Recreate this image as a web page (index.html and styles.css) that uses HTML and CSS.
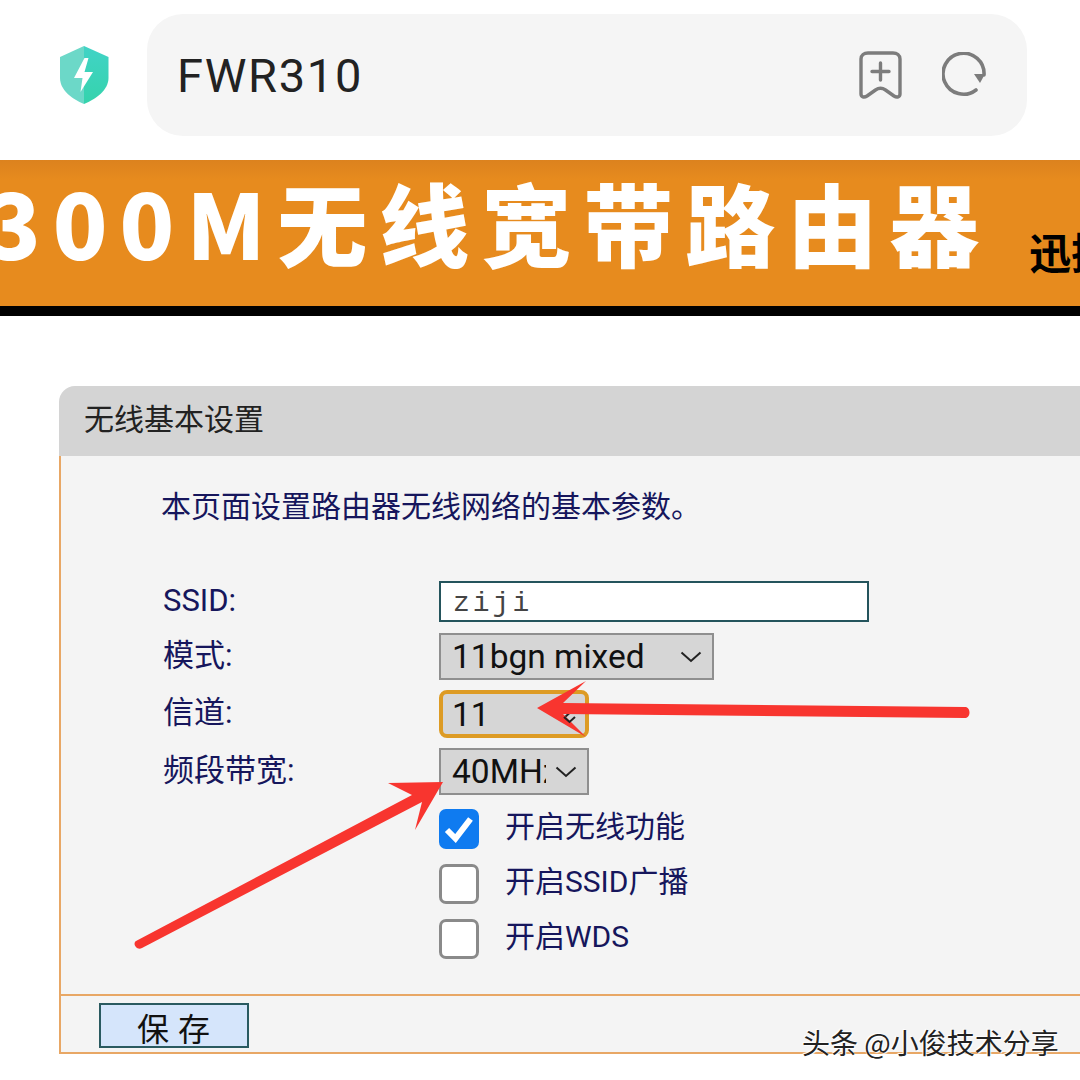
FILE: index.html
```html
<!DOCTYPE html>
<html lang="zh-CN">

<head>
    <meta charset="UTF-8" />
    <title>FWR310</title>
    <link rel="stylesheet" href="styles.css">
</head>

<body>
    <div class="topbar">
        <svg class="shield" width="52" height="60" viewBox="0 0 52 60">
            <defs>
                <linearGradient id="shieldRight" x1="0" y1="0" x2="0" y2="1">
                    <stop offset="0" stop-color="#41d3c6" />
                    <stop offset="1" stop-color="#35d3ac" />
                </linearGradient>
            </defs>
            <path d="M26 1L2 12V33C2 45 14 54 26 59V1Z" fill="#6cd8c8" />
            <path d="M26 1L50.500 12V33C50.500 45 38 54 26 59V1Z" fill="url(#shieldRight)" />
            <path d="M26.500 13L16 33H24.500L22.500 47L35 27H26.500L30.500 13Z" fill="#fff" />
        </svg>
        <div class="address">
            <span class="address-text">FWR310</span>
            <svg class="bookmark" width="44" height="50" viewBox="0 0 44 50" fill="none" stroke="#7c7c7c"
                stroke-width="3.400" stroke-linecap="round" stroke-linejoin="round">
                <path d="M9 3H34C38 3 41 5 41 9V44C41 47 38 48 35 46L26.500 40C23.500 38 19.500 38 16.500 40L8 46C5 48 2 47 2 44V9C2 5 5 3 9 3Z" />
                <path d="M21.500 13V30M13 21.500H30" />
            </svg>
            <svg class="refresh" width="46" height="46" viewBox="0 0 46 46" fill="none">
                <path d="M34 38A20.500 20.500 0 1 1 42 23" stroke="#7c7c7c" stroke-width="3.600" stroke-linecap="round" />
                <path d="M32 22H43L38 31Z" fill="#7c7c7c" />
            </svg>
        </div>
    </div>

    <div class="banner">
        <span class="banner-title">300M无线宽带路由器</span>
        <span class="banner-sub">迅捷</span>
    </div>

    <div class="panel">
        <div class="panel-head">无线基本设置</div>
        <div class="panel-body">
            <p class="intro">本页面设置路由器无线网络的基本参数。</p>
            <div class="form">
                <label class="row-label">SSID:</label>
                <div class="text-input">ziji</div>

                <label class="row-label">模式:</label>
                <div class="select select-mode">
                    <span class="select-value">11bgn mixed</span>
                    <svg class="chevron" width="22" height="12" viewBox="0 0 22 12">
                        <path d="M1.500 1.500L11 10L20.500 1.500" />
                    </svg>
                </div>

                <label class="row-label">信道:</label>
                <div class="select select-short select-focus">
                    <span class="select-value">11</span>
                    <svg class="chevron" width="22" height="12" viewBox="0 0 22 12">
                        <path d="M1.500 1.500L11 10L20.500 1.500" />
                    </svg>
                </div>

                <label class="row-label">频段带宽:</label>
                <div class="select select-short">
                    <span class="select-value">40MHz</span>
                    <svg class="chevron" width="22" height="12" viewBox="0 0 22 12">
                        <path d="M1.500 1.500L11 10L20.500 1.500" />
                    </svg>
                </div>

                <div class="checks">
                    <div class="check-row">
                        <div class="checkbox checked">
                            <svg width="30" height="28" viewBox="0 0 30 28" fill="none">
                                <path d="M3 15L11.500 23.500L26.500 4" stroke="#fff" stroke-width="6" />
                            </svg>
                        </div>
                        <span>开启无线功能</span>
                    </div>
                    <div class="check-row">
                        <div class="checkbox"></div>
                        <span>开启SSID广播</span>
                    </div>
                    <div class="check-row">
                        <div class="checkbox"></div>
                        <span>开启WDS</span>
                    </div>
                </div>
            </div>
        </div>
        <div class="panel-foot">
            <button class="save">保 存</button>
        </div>
    </div>

    <!-- annotation arrows drawn on top of the screenshot -->
    <svg class="arrows" width="1080" height="1080" viewBox="0 0 1080 1080">
        <path d="M537 708L586 681L563 703L965 707C971 707 971 718 965 718L563 714L586 737Z" fill="#f8352f" />
        <path d="M443 782L388 783L412 795L136 941C132 944 137 951 142 948L422 802L415 830Z" fill="#f8352f" />
        <path d="M564 717L569.500 722L575 717" fill="none" stroke="#222" stroke-width="2" />
    </svg>

    <div class="watermark">头条 @小俊技术分享</div>
</body>

</html>
```

FILE: styles.css
```css
html,
body {
    margin: 0;
    padding: 0;
}

body {
    width: 1080px;
    height: 1080px;
    overflow: hidden;
    position: relative;
    background-color: #fff;
    font-family: Roboto, "Noto Sans CJK SC", sans-serif;
}

.topbar {
    height: 160px;
    box-sizing: border-box;
    padding: 14px 53px 24px 58px;
    display: flex;
    align-items: center;
    gap: 37px;
}

.shield {
    flex: none;
}

.address {
    flex: 1;
    height: 122px;
    box-sizing: border-box;
    padding: 0 39px 0 30px;
    display: flex;
    align-items: center;
    background-color: #f5f5f5;
    border-radius: 36px;
}

.address-text {
    flex: 1;
    font-size: 47px;
    letter-spacing: 1.700px;
    color: #222;
}

.bookmark {
    margin-right: 39px;
}

.banner {
    height: 156px;
    box-sizing: border-box;
    padding-bottom: 24px;
    border-bottom: 10px solid #000;
    background: linear-gradient(#dc821e, #e78b1e 14%);
    display: flex;
    align-items: center;
    white-space: nowrap;
    overflow: hidden;
}

.banner-title {
    margin-left: -14px;
    font-family: "Noto Sans CJK SC", sans-serif;
    font-size: 90px;
    font-weight: 900;
    letter-spacing: 12px;
    color: #fff;
    flex: none;
}

.banner-sub {
    margin-left: 38px;
    margin-top: 58px;
    font-family: "Noto Sans CJK SC", sans-serif;
    font-size: 42px;
    font-weight: 700;
    color: #000;
    flex: none;
}

.panel {
    margin: 70px -10px 0 59px;
}

.panel-head {
    height: 70px;
    box-sizing: border-box;
    padding: 0 0 9px 25px;
    display: flex;
    align-items: center;
    background-color: #d4d4d4;
    border-top-left-radius: 16px;
    font-size: 30px;
    color: #222;
}

.panel-body {
    height: 540px;
    box-sizing: border-box;
    padding: 31px 0 0 102px;
    background-color: #f4f4f4;
    border-left: 2px solid #e8a765;
    border-bottom: 2px solid #e8a765;
}

.intro {
    margin: 0 0 0 -2px;
    font-size: 30px;
    line-height: 40px;
    color: #16165c;
}

.form {
    margin-top: 54px;
    display: grid;
    grid-template-columns: 276px 1fr;
    align-items: center;
    row-gap: 10px;
    font-size: 30px;
    color: #16165c;
}

.row-label {
    font-size: 31px;
    line-height: 40px;
    margin-top: -2px;
}

.text-input {
    width: 430px;
    height: 41px;
    box-sizing: border-box;
    margin-bottom: 1px;
    padding-left: 12px;
    background-color: #fff;
    border: 2px solid #24545c;
    font-family: "Liberation Mono", monospace;
    font-size: 28px;
    line-height: 41px;
    letter-spacing: 3px;
    color: #444;
}

.select {
    height: 47px;
    box-sizing: border-box;
    padding: 0 10px 0 11px;
    display: flex;
    align-items: center;
    justify-content: space-between;
    background-color: #d6d6d6;
    border: 2px solid #8f8f8f;
    font-size: 33.500px;
    color: #111;
}

.select-mode {
    width: 275px;
}

.select-short {
    width: 150px;
}

.select-focus {
    height: 48px;
    border: 4px solid #dd9b24;
    border-radius: 8px;
    padding-left: 9px;
}

.select-value {
    width: 94px;
    overflow: hidden;
    white-space: nowrap;
    flex: none;
}

.select-mode .select-value {
    width: auto;
}

.chevron {
    flex: none;
    fill: none;
    stroke: #222;
    stroke-width: 2;
}

.checks {
    grid-column: 2;
    margin-top: 4px;
    display: flex;
    flex-direction: column;
    gap: 15px;
}

.check-row {
    height: 40px;
    display: flex;
    align-items: center;
    gap: 26px;
    line-height: 36px;
}

.check-row span {
    margin-top: -4px;
}

.checkbox {
    width: 40px;
    height: 40px;
    box-sizing: border-box;
    background-color: #fff;
    border: 3px solid #8a8a8a;
    border-radius: 7px;
    display: flex;
    align-items: center;
    justify-content: center;
}

.checkbox.checked {
    background-color: #0f7bf0;
    border: 0;
}

.panel-foot {
    height: 58px;
    box-sizing: border-box;
    padding: 7px 0 0 38px;
    background-color: #f4f4f4;
    border-left: 2px solid #e8a765;
    border-bottom: 2px solid #e8a765;
}

.save {
    display: block;
    width: 150px;
    height: 45px;
    box-sizing: border-box;
    padding: 2px 0 0;
    background-color: #d5e5fb;
    border: 2px solid #2a5a60;
    font-family: "Noto Sans CJK SC", sans-serif;
    font-size: 32px;
    line-height: 40px;
    letter-spacing: 1px;
    color: #111;
    overflow: hidden;
}

.arrows {
    position: absolute;
    left: 0;
    top: 0;
}

.watermark {
    position: absolute;
    left: 802px;
    top: 1024px;
    font-family: "Noto Sans CJK SC", sans-serif;
    font-size: 28px;
    line-height: 36px;
    color: #222;
    text-shadow: 1px 1px 1px #fff, -1px -1px 1px #fff;
    white-space: nowrap;
}
```
